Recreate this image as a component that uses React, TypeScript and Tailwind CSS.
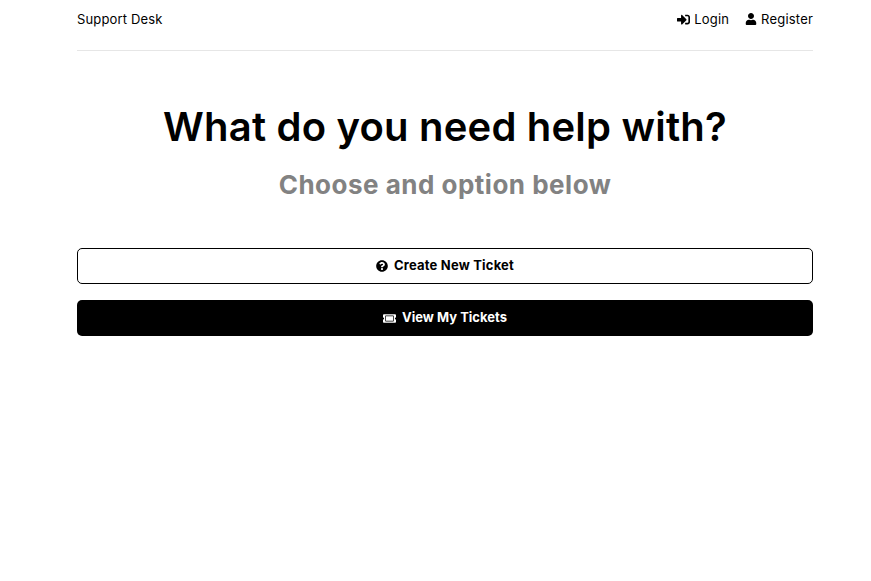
import { FaSignInAlt, FaUser, FaQuestionCircle, FaTicketAlt } from "react-icons/fa";

export default function App() {
  return (
    <div className="min-h-[581px] bg-white text-black font-['Inter',sans-serif] overflow-hidden">
      <div className="w-[736px] ml-[77px] text-center">
        <header className="flex justify-between items-start h-[51px] pt-[9px] border-b border-[#e6e6e6] text-[13px] leading-[20px] tracking-[0.15px]">
          <div>Support Desk</div>
          <ul className="flex gap-4">
            <li className="flex items-center gap-1"><FaSignInAlt size={13} /><span>Login</span></li>
            <li className="flex items-center gap-1"><FaUser size={12} /><span className="tracking-[0.2px]">Register</span></li>
          </ul>
        </header>
        <section className="pt-[50px] pb-[46px]">
          <h1 className="text-[40px] leading-[52px] font-semibold tracking-[0.2px]">What do you need help with?</h1>
          <p className="text-[26px] leading-[34px] font-bold text-[#828282] mt-[15px] tracking-[0.5px]">Choose and option below</p>
        </section>
        <a className="flex items-center justify-center gap-[6px] h-9 border border-black rounded-[5px] text-[13px] font-bold tracking-[0.2px] mb-4">
          <FaQuestionCircle size={12} /> Create New Ticket
        </a>
        <a className="flex items-center justify-center gap-[6px] h-9 bg-black text-white rounded-[5px] text-[13px] font-bold">
          <FaTicketAlt size={13} /> View My Tickets
        </a>
      </div>
    </div>
  );
}
